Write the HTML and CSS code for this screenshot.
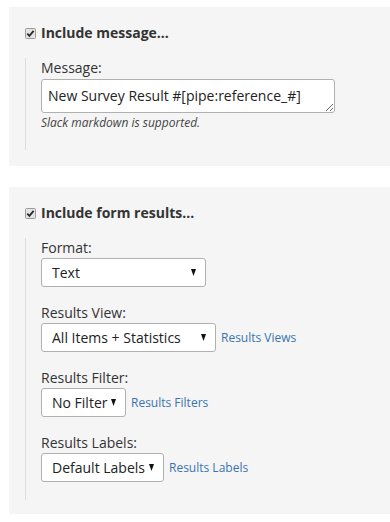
FILE: index.html
```html
<!DOCTYPE html>
<html>
<head>
<meta charset="utf-8">
<link rel="stylesheet" href="styles.css">
</head>
<body>
<section class="panel panel-first">
  <div class="head">
    <svg class="check" width="11" height="11" viewBox="0 0 11 11"><rect x="0.5" y="0.5" width="10" height="10" rx="1" fill="#e4e4e4" stroke="#9a9a9a"/><path d="M2.3 5.6 L4.4 7.8 L8.6 2.8" fill="none" stroke="#2a2a2a" stroke-width="1.8"/></svg>
    <span class="title">Include message...</span>
  </div>
  <div class="body">
    <div class="label">Message:</div>
    <textarea class="textarea">New Survey Result #[pipe:reference_#]</textarea>
    <div class="hint">Slack markdown is supported.</div>
  </div>
</section>
<section class="panel panel-second">
  <div class="head">
    <svg class="check" width="11" height="11" viewBox="0 0 11 11"><rect x="0.5" y="0.5" width="10" height="10" rx="1" fill="#e4e4e4" stroke="#9a9a9a"/><path d="M2.3 5.6 L4.4 7.8 L8.6 2.8" fill="none" stroke="#2a2a2a" stroke-width="1.8"/></svg>
    <span class="title">Include form results...</span>
  </div>
  <div class="body">
    <div class="group">
      <div class="label">Format:</div>
      <div class="row">
        <div class="select w-format"><span>Text</span><svg class="caret" width="5" height="7" viewBox="0 0 5 7"><path d="M0 0 H5 L2.5 7 Z" fill="#111"/></svg></div>
      </div>
    </div>
    <div class="group">
      <div class="label">Results View:</div>
      <div class="row">
        <div class="select w-view"><span>All Items + Statistics</span><svg class="caret" width="5" height="7" viewBox="0 0 5 7"><path d="M0 0 H5 L2.5 7 Z" fill="#111"/></svg></div>
        <a class="link" href="#">Results Views</a>
      </div>
    </div>
    <div class="group">
      <div class="label">Results Filter:</div>
      <div class="row">
        <div class="select w-filter"><span>No Filter</span><svg class="caret" width="5" height="7" viewBox="0 0 5 7"><path d="M0 0 H5 L2.5 7 Z" fill="#111"/></svg></div>
        <a class="link" href="#">Results Filters</a>
      </div>
    </div>
    <div class="group">
      <div class="label">Results Labels:</div>
      <div class="row">
        <div class="select w-labels"><span>Default Labels</span><svg class="caret" width="5" height="7" viewBox="0 0 5 7"><path d="M0 0 H5 L2.5 7 Z" fill="#111"/></svg></div>
        <a class="link" href="#">Results Labels</a>
      </div>
    </div>
  </div>
</section>
</body>
</html>
```
FILE: styles.css
```css
html, body {
  margin: 0;
  padding: 0;
  background: #ffffff;
}
body {
  font-family: "Open Sans", "Liberation Sans", sans-serif;
  color: #333333;
  font-size: 14px;
  line-height: 20px;
}
.panel {
  background: #f5f5f5;
  margin-left: 9px;
  padding: 16px 0 15px 16px;
}
.panel-first {
  margin-top: 7px;
  padding-bottom: 16px;
}
.panel-second {
  margin-top: 21px;
  padding-bottom: 14px;
}
.head {
  display: flex;
  align-items: center;
  height: 20px;
}
.check {
  display: block;
  flex: none;
}
.title {
  margin-left: 5px;
  font-weight: 700;
  font-size: 14px;
  line-height: 20px;
  color: #333333;
}
.body {
  margin-top: 15px;
  border-left: 1px solid #dcdcdc;
  padding: 0 0 18px 15px;
}
.label {
  font-size: 14px;
  line-height: 20px;
  color: #333333;
}
.textarea {
  display: block;
  box-sizing: border-box;
  width: 294px;
  height: 34px;
  margin: 1px 0 0 0;
  padding: 6px 6px;
  border: 1px solid #b0b0b0;
  border-radius: 3px;
  background: #ffffff;
  font-family: "Open Sans", "Liberation Sans", sans-serif;
  font-size: 14px;
  line-height: 20px;
  color: #222222;
  resize: vertical;
  overflow: hidden;
}
.hint {
  margin-top: 1px;
  font-size: 12px;
  line-height: 18px;
  font-style: italic;
  color: #444444;
}
.group + .group {
  margin-top: 16px;
}
.row {
  display: flex;
  align-items: center;
}
.select {
  box-sizing: border-box;
  height: 29px;
  display: flex;
  align-items: center;
  justify-content: space-between;
  padding: 0 9px 0 10px;
  border: 1px solid #b0b0b0;
  border-radius: 3px;
  background: #ffffff;
  font-size: 14px;
  color: #222222;
  white-space: nowrap;
}
.caret {
  display: block;
  flex: none;
  margin-top: -1px;
}
.w-format { width: 165px; }
.w-view { width: 175px; }
.w-filter { width: 85px; }
.w-labels { width: 123px; }
.link {
  margin-left: 5px;
  font-size: 12px;
  color: #3a74ad;
  text-decoration: none;
}
```
